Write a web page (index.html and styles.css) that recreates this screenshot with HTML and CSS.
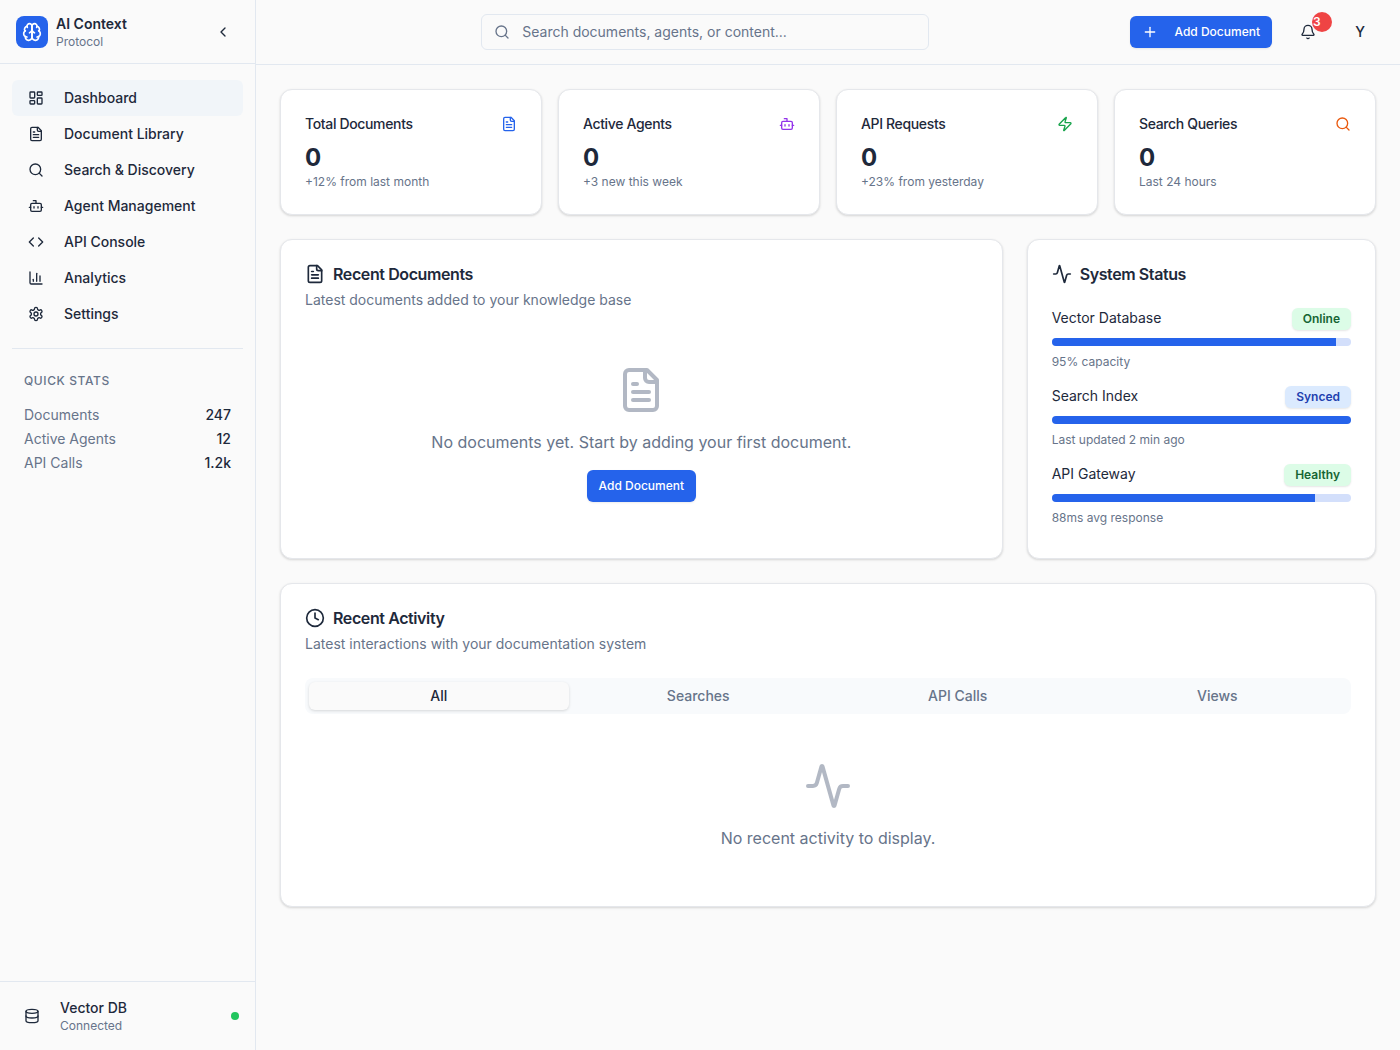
FILE: index.html
```html
<!DOCTYPE html>
<html lang="en">
  <head>
    <meta charset="UTF-8" />
    <meta name="viewport" content="width=device-width, initial-scale=1.0" />
    <title>AI Context Protocol</title>
    <link rel="stylesheet" href="styles.css">
  </head>
  <body>
    <!-- Shared icons -->
    <svg class="sprite" aria-hidden="true">
      <symbol id="file-text" viewBox="0 0 24 24">
        <path d="M15 2H6a2 2 0 0 0-2 2v16a2 2 0 0 0 2 2h12a2 2 0 0 0 2-2V7Z" />
        <path d="M14 2v4a2 2 0 0 0 2 2h4" />
        <path d="M10 9H8" />
        <path d="M16 13H8" />
        <path d="M16 17H8" />
      </symbol>
      <symbol id="search" viewBox="0 0 24 24">
        <circle cx="11" cy="11" r="8" />
        <path d="m21 21-4.3-4.3" />
      </symbol>
      <symbol id="bot" viewBox="0 0 24 24">
        <path d="M12 8V4H8" />
        <rect width="16" height="12" x="4" y="8" rx="2" />
        <path d="M2 14h2" />
        <path d="M20 14h2" />
        <path d="M15 13v2" />
        <path d="M9 13v2" />
      </symbol>
      <symbol id="activity" viewBox="0 0 24 24">
        <path d="M22 12h-2.48a2 2 0 0 0-1.93 1.46l-2.35 8.36a.25.25 0 0 1-.48 0L9.24 2.18a.25.25 0 0 0-.48 0l-2.35 8.36A2 2 0 0 1 4.49 12H2" />
      </symbol>
    </svg>

    <div class="app">
      <aside class="sidebar">
        <div class="brand">
          <div class="logo">
            <svg class="icon icon-md" viewBox="0 0 24 24">
              <path d="M12 5a3 3 0 1 0-5.997.125 4 4 0 0 0-2.526 5.77 4 4 0 0 0 .556 6.588A4 4 0 1 0 12 18Z" />
              <path d="M12 5a3 3 0 1 1 5.997.125 4 4 0 0 1 2.526 5.77 4 4 0 0 1-.556 6.588A4 4 0 1 1 12 18Z" />
              <path d="M15 13a4.5 4.5 0 0 1-3-4 4.5 4.5 0 0 1-3 4" />
              <path d="M17.599 6.5a3 3 0 0 0 .399-1.375" />
              <path d="M6.003 5.125A3 3 0 0 0 6.401 6.5" />
              <path d="M3.477 10.896a4 4 0 0 1 .585-.396" />
              <path d="M19.938 10.5a4 4 0 0 1 .585.396" />
              <path d="M6 18a4 4 0 0 1-1.967-.516" />
              <path d="M19.967 17.484A4 4 0 0 1 18 18" />
            </svg>
          </div>
          <div class="grow">
            <div class="brand-name">AI Context</div>
            <div class="caption">Protocol</div>
          </div>
          <button class="icon-button" aria-label="Collapse sidebar">
            <svg class="icon" viewBox="0 0 24 24"><path d="m15 18-6-6 6-6" /></svg>
          </button>
        </div>

        <div class="sidebar-body">
          <nav class="nav">
            <a href="#" class="nav-item active" aria-current="page">
              <svg class="icon" viewBox="0 0 24 24">
                <rect width="7" height="9" x="3" y="3" rx="1" />
                <rect width="7" height="5" x="14" y="3" rx="1" />
                <rect width="7" height="9" x="14" y="12" rx="1" />
                <rect width="7" height="5" x="3" y="16" rx="1" />
              </svg>
              Dashboard
            </a>
            <a href="#" class="nav-item">
              <svg class="icon"><use href="#file-text" /></svg>
              Document Library
            </a>
            <a href="#" class="nav-item">
              <svg class="icon"><use href="#search" /></svg>
              Search &amp; Discovery
            </a>
            <a href="#" class="nav-item">
              <svg class="icon"><use href="#bot" /></svg>
              Agent Management
            </a>
            <a href="#" class="nav-item">
              <svg class="icon" viewBox="0 0 24 24">
                <path d="m16 18 6-6-6-6" />
                <path d="m8 6-6 6 6 6" />
              </svg>
              API Console
            </a>
            <a href="#" class="nav-item">
              <svg class="icon" viewBox="0 0 24 24">
                <path d="M3 3v16a2 2 0 0 0 2 2h16" />
                <path d="M18 17V9" />
                <path d="M13 17V5" />
                <path d="M8 17v-3" />
              </svg>
              Analytics
            </a>
            <a href="#" class="nav-item">
              <svg class="icon" viewBox="0 0 24 24">
                <path d="M12.22 2h-.44a2 2 0 0 0-2 2v.18a2 2 0 0 1-1 1.73l-.43.25a2 2 0 0 1-2 0l-.15-.08a2 2 0 0 0-2.73.73l-.22.38a2 2 0 0 0 .73 2.73l.15.1a2 2 0 0 1 1 1.72v.51a2 2 0 0 1-1 1.74l-.15.09a2 2 0 0 0-.73 2.73l.22.38a2 2 0 0 0 2.73.73l.15-.08a2 2 0 0 1 2 0l.43.25a2 2 0 0 1 1 1.73V20a2 2 0 0 0 2 2h.44a2 2 0 0 0 2-2v-.18a2 2 0 0 1 1-1.73l.43-.25a2 2 0 0 1 2 0l.15.08a2 2 0 0 0 2.73-.73l.22-.39a2 2 0 0 0-.73-2.73l-.15-.08a2 2 0 0 1-1-1.74v-.5a2 2 0 0 1 1-1.74l.15-.09a2 2 0 0 0 .73-2.73l-.22-.38a2 2 0 0 0-2.73-.73l-.15.08a2 2 0 0 1-2 0l-.43-.25a2 2 0 0 1-1-1.73V4a2 2 0 0 0-2-2z" />
                <circle cx="12" cy="12" r="3" />
              </svg>
              Settings
            </a>
          </nav>

          <section class="quick-stats">
            <h2>Quick Stats</h2>
            <dl>
              <div><dt>Documents</dt><dd>247</dd></div>
              <div><dt>Active Agents</dt><dd>12</dd></div>
              <div><dt>API Calls</dt><dd>1.2k</dd></div>
            </dl>
          </section>
        </div>

        <div class="db-status">
          <div class="db-icon">
            <svg class="icon" viewBox="0 0 24 24">
              <ellipse cx="12" cy="5" rx="9" ry="3" />
              <path d="M3 5v14a9 3 0 0 0 18 0V5" />
              <path d="M3 12a9 3 0 0 0 18 0" />
            </svg>
          </div>
          <div class="grow">
            <div class="db-name">Vector DB</div>
            <div class="caption">Connected</div>
          </div>
          <span class="dot"></span>
        </div>
      </aside>

      <div class="page">
        <header class="topbar">
          <div class="search-area">
            <label class="search-box">
              <svg class="icon"><use href="#search" /></svg>
              <input type="search" placeholder="Search documents, agents, or content..." aria-label="Search" />
            </label>
          </div>
          <button class="button">
            <svg class="icon" viewBox="0 0 24 24"><path d="M5 12h14" /><path d="M12 5v14" /></svg>
            Add Document
          </button>
          <button class="icon-button bell" aria-label="Notifications">
            <svg class="icon" viewBox="0 0 24 24">
              <path d="M10.268 21a2 2 0 0 0 3.464 0" />
              <path d="M3.262 15.326A1 1 0 0 0 4 17h16a1 1 0 0 0 .74-1.673C19.41 13.956 18 12.499 18 8A6 6 0 0 0 6 8c0 4.499-1.411 5.956-2.738 7.326" />
            </svg>
            <span class="count">3</span>
          </button>
          <button class="icon-button avatar">Y</button>
        </header>

        <main class="content">
          <div class="stats">
            <section class="card">
              <div class="stat-head">
                <h2>Total Documents</h2>
                <svg class="icon blue"><use href="#file-text" /></svg>
              </div>
              <div class="stat-value">0</div>
              <p class="caption">+12% from last month</p>
            </section>
            <section class="card">
              <div class="stat-head">
                <h2>Active Agents</h2>
                <svg class="icon purple"><use href="#bot" /></svg>
              </div>
              <div class="stat-value">0</div>
              <p class="caption">+3 new this week</p>
            </section>
            <section class="card">
              <div class="stat-head">
                <h2>API Requests</h2>
                <svg class="icon green" viewBox="0 0 24 24">
                  <path d="M4 14a1 1 0 0 1-.78-1.63l9.9-10.2a.5.5 0 0 1 .86.46l-1.92 6.02A1 1 0 0 0 13 10h7a1 1 0 0 1 .78 1.63l-9.9 10.2a.5.5 0 0 1-.86-.46l1.92-6.02A1 1 0 0 0 11 14z" />
                </svg>
              </div>
              <div class="stat-value">0</div>
              <p class="caption">+23% from yesterday</p>
            </section>
            <section class="card">
              <div class="stat-head">
                <h2>Search Queries</h2>
                <svg class="icon orange"><use href="#search" /></svg>
              </div>
              <div class="stat-value">0</div>
              <p class="caption">Last 24 hours</p>
            </section>
          </div>

          <div class="panels">
            <section class="card documents">
              <h2 class="card-title">
                <svg class="icon icon-md"><use href="#file-text" /></svg>
                Recent Documents
              </h2>
              <p class="description">Latest documents added to your knowledge base</p>
              <div class="empty">
                <svg class="icon icon-lg"><use href="#file-text" /></svg>
                <p>No documents yet. Start by adding your first document.</p>
                <button class="button">Add Document</button>
              </div>
            </section>

            <section class="card">
              <h2 class="card-title">
                <svg class="icon icon-md"><use href="#activity" /></svg>
                System Status
              </h2>
              <div class="status-list">
                <div class="status">
                  <div class="status-head">
                    <span>Vector Database</span>
                    <span class="badge badge-green">Online</span>
                  </div>
                  <div class="bar"><div class="bar-fill" style="width: 95%"></div></div>
                  <p class="caption">95% capacity</p>
                </div>
                <div class="status">
                  <div class="status-head">
                    <span>Search Index</span>
                    <span class="badge badge-blue">Synced</span>
                  </div>
                  <div class="bar"><div class="bar-fill" style="width: 100%"></div></div>
                  <p class="caption">Last updated 2 min ago</p>
                </div>
                <div class="status">
                  <div class="status-head">
                    <span>API Gateway</span>
                    <span class="badge badge-green">Healthy</span>
                  </div>
                  <div class="bar"><div class="bar-fill" style="width: 88%"></div></div>
                  <p class="caption">88ms avg response</p>
                </div>
              </div>
            </section>
          </div>

          <section class="card">
            <h2 class="card-title">
              <svg class="icon icon-md" viewBox="0 0 24 24">
                <circle cx="12" cy="12" r="10" />
                <path d="M12 6v6l4 2" />
              </svg>
              Recent Activity
            </h2>
            <p class="description">Latest interactions with your documentation system</p>
            <div class="tabs" role="tablist">
              <button class="tab selected" role="tab" aria-selected="true">All</button>
              <button class="tab" role="tab" aria-selected="false">Searches</button>
              <button class="tab" role="tab" aria-selected="false">API Calls</button>
              <button class="tab" role="tab" aria-selected="false">Views</button>
            </div>
            <div class="empty activity-empty">
              <svg class="icon icon-lg"><use href="#activity" /></svg>
              <p>No recent activity to display.</p>
            </div>
          </section>
        </main>
      </div>
    </div>
  </body>
</html>
```

FILE: styles.css
```css
* {
  box-sizing: border-box;
}

body {
  margin: 0;
  font-family: Inter, "Liberation Sans", sans-serif;
  font-size: 14px;
  line-height: 20px;
  color: #1e293b;
  background: #fafafa;
}

h2,
p,
dl,
dd {
  margin: 0;
}

button,
input {
  font: inherit;
  color: inherit;
}

button {
  border: none;
  background: none;
  cursor: pointer;
}

/* Icons */
.sprite {
  display: none;
}

.icon {
  width: 16px;
  height: 16px;
  flex-shrink: 0;
  fill: none;
  stroke: currentColor;
  stroke-width: 2;
  stroke-linecap: round;
  stroke-linejoin: round;
}

.icon-md {
  width: 20px;
  height: 20px;
}

.icon-lg {
  width: 48px;
  height: 48px;
}

.blue {
  color: #2563eb;
}

.purple {
  color: #9333ea;
}

.green {
  color: #16a34a;
}

.orange {
  color: #ea580c;
}

.caption {
  font-size: 12px;
  line-height: 16px;
  color: #67748a;
}

.grow {
  flex: 1;
}

.app {
  display: flex;
  min-height: 100vh;
}

/* Sidebar */
.sidebar {
  display: flex;
  flex-direction: column;
  flex-shrink: 0;
  width: 256px;
  height: 100vh;
  position: sticky;
  top: 0;
  border-right: 1px solid #e2e8f0;
}

.brand {
  display: flex;
  align-items: center;
  gap: 8px;
  height: 64px;
  padding: 0 16px;
  border-bottom: 1px solid #e2e8f0;
}

.logo {
  display: flex;
  align-items: center;
  justify-content: center;
  width: 32px;
  height: 32px;
  border-radius: 8px;
  background: #2563eb;
  color: #fff;
}

.brand-name {
  font-weight: 600;
}

.icon-button {
  display: flex;
  align-items: center;
  justify-content: center;
  width: 32px;
  height: 32px;
  padding: 0;
  border-radius: 6px;
}

.sidebar-body {
  flex: 1;
  padding: 16px 12px;
  overflow-y: auto;
}

.nav {
  padding-bottom: 16px;
  border-bottom: 1px solid #e2e8f0;
}

.nav-item {
  display: flex;
  align-items: center;
  gap: 20px;
  padding: 8px 16px;
  border-radius: 6px;
  font-weight: 500;
  color: inherit;
  text-decoration: none;
}

.nav-item.active {
  background: #f1f5f9;
}

.quick-stats {
  padding: 24px 12px;
}

.quick-stats h2 {
  margin-bottom: 16px;
  font-size: 12px;
  line-height: 16px;
  font-weight: 500;
  letter-spacing: 0.05em;
  text-transform: uppercase;
  color: #67748a;
}

.quick-stats dl {
  display: grid;
  gap: 4px;
}

.quick-stats dl div {
  display: flex;
  justify-content: space-between;
}

.quick-stats dt {
  color: #67748a;
}

.quick-stats dd {
  font-weight: 500;
}

.db-status {
  display: flex;
  align-items: center;
  gap: 12px;
  padding: 16px;
  border-top: 1px solid #e2e8f0;
}

.db-icon {
  display: flex;
  justify-content: center;
  width: 32px;
}

.db-name {
  font-weight: 500;
}

.dot {
  width: 8px;
  height: 8px;
  border-radius: 50%;
  background: #22c55e;
}

/* Top bar */
.page {
  flex: 1;
  min-width: 0;
}

.topbar {
  display: flex;
  align-items: center;
  height: 65px;
  padding: 0 24px;
  border-bottom: 1px solid #e2e8f0;
}

.search-area {
  flex: 1;
}

.search-box {
  display: flex;
  align-items: center;
  gap: 12px;
  max-width: 448px;
  height: 36px;
  margin: 0 auto;
  padding: 0 12px;
  border: 1px solid #e2e8f0;
  border-radius: 6px;
  color: #67748a;
}

.search-box input {
  flex: 1;
  min-width: 0;
  padding: 0;
  border: none;
  outline: none;
  background: none;
}

.search-box input::placeholder {
  color: #67748a;
}

.button {
  display: flex;
  align-items: center;
  gap: 16px;
  height: 32px;
  padding: 0 12px;
  border-radius: 6px;
  background: #2563eb;
  color: #fff;
  font-size: 12px;
  line-height: 16px;
  font-weight: 500;
  box-shadow: 0 1px 2px rgba(0, 0, 0, 0.08);
}

.bell {
  position: relative;
  width: 40px;
  margin: 0 16px;
}

.count {
  position: absolute;
  top: -4px;
  right: -4px;
  width: 20px;
  height: 20px;
  padding-left: 1px;
  border-radius: 50%;
  background: #ef4444;
  color: #fff;
  font-size: 12px;
  line-height: 20px;
  font-weight: 600;
  text-align: left;
}

.avatar {
  font-weight: 500;
}

/* Dashboard */
.content {
  display: grid;
  gap: 24px;
  padding: 24px;
}

.card {
  padding: 24px;
  border: 1px solid #e5e7eb;
  border-radius: 12px;
  background: #fff;
  box-shadow: 0 1px 3px rgba(0, 0, 0, 0.1), 0 1px 2px rgba(0, 0, 0, 0.06);
}

.stats {
  display: grid;
  grid-template-columns: repeat(4, 1fr);
  gap: 16px;
}

.stat-head {
  display: flex;
  align-items: center;
  justify-content: space-between;
  margin-bottom: 8px;
}

.stat-head h2 {
  font-size: 14px;
  line-height: 20px;
  font-weight: 500;
  letter-spacing: -0.025em;
}

.stat-value {
  font-size: 24px;
  line-height: 32px;
  font-weight: 700;
}

.panels {
  display: grid;
  grid-template-columns: repeat(3, 1fr);
  gap: 24px;
}

.documents {
  grid-column: span 2;
}

.card-title {
  display: flex;
  align-items: center;
  gap: 8px;
  font-size: 16px;
  line-height: 20px;
  font-weight: 600;
  letter-spacing: -0.025em;
}

.description {
  margin-top: 6px;
  color: #67748a;
}

.empty {
  display: flex;
  flex-direction: column;
  align-items: center;
  gap: 16px;
  margin-top: 24px;
  padding: 32px 0;
  font-size: 16px;
  line-height: 24px;
  color: #67748a;
}

.empty .icon {
  opacity: 0.5;
}

.status-list {
  display: grid;
  gap: 16px;
  margin-top: 24px;
}

.status {
  display: grid;
  gap: 8px;
}

.status-head {
  display: flex;
  justify-content: space-between;
}

.badge {
  padding: 3px 11px;
  border-radius: 6px;
  font-size: 12px;
  line-height: 16px;
  font-weight: 600;
  box-shadow: 0 1px 2px rgba(0, 0, 0, 0.1);
}

.badge-green {
  background: #dcfce7;
  color: #166534;
}

.badge-blue {
  background: #dbeafe;
  color: #1e40af;
}

.bar {
  height: 8px;
  border-radius: 4px;
  background: #d3dffb;
  overflow: hidden;
}

.bar-fill {
  height: 100%;
  background: #2563eb;
}

.tabs {
  display: grid;
  grid-template-columns: repeat(4, 1fr);
  margin-top: 24px;
  padding: 4px;
  border-radius: 8px;
  background: #f8fafc;
}

.tab {
  padding: 4px 12px;
  border-radius: 6px;
  font-weight: 500;
  color: #67748a;
}

.tab.selected {
  background: #fafafa;
  color: #1e293b;
  box-shadow: 0 1px 3px rgba(0, 0, 0, 0.14);
}

.activity-empty {
  margin-top: 16px;
}
```
